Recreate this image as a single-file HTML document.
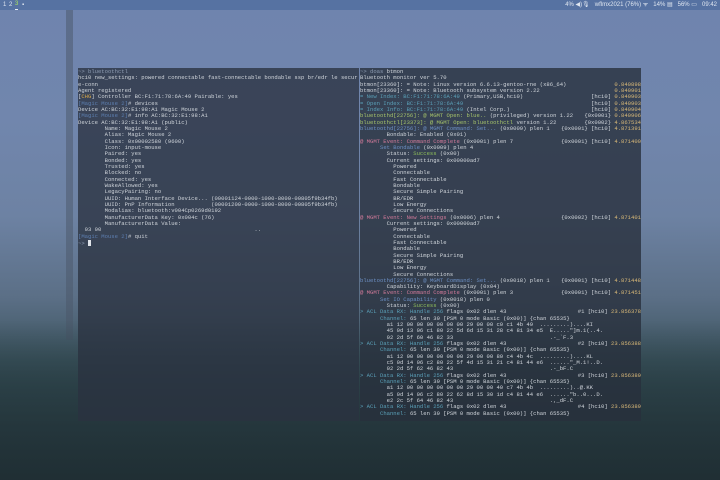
<!DOCTYPE html>
<html><head><meta charset="utf-8"><style>
*{margin:0;padding:0;box-sizing:border-box}
html,body{width:720px;height:480px;overflow:hidden}
body{position:relative;font-family:"Liberation Mono",monospace;
background:linear-gradient(180deg,#6f84ae 0%,#7186ad 25%,#6d82a3 45%,#5b6f86 62%,#3d5560 75%,#2e4149 88%,#26353b 100%);}
.bar{position:absolute;left:0;top:0;width:720px;height:10px;background:#5672a2;font-family:"Liberation Sans",sans-serif;font-size:6px;color:#dfe6f0;line-height:10px}
.bar .ws{position:absolute;top:0}
.bar .act{color:#a8e060;border-bottom:1px solid #e8eef5;line-height:9px}
.bar .rt{position:absolute;right:3px;top:0;white-space:pre}
.pole{position:absolute;left:66px;top:10px;width:7px;height:330px;background:#4a5668;opacity:.5}
.bl{position:absolute;left:0;top:320px;width:720px;height:160px;background:linear-gradient(180deg,rgba(40,70,75,0) 0%,rgba(35,55,60,.6) 40%,rgba(30,45,50,.8) 100%)}
.term{position:absolute;top:68px;height:353px;background:rgba(42,50,64,.78);font-size:5.55px;line-height:6.33px;color:#cfd4da;overflow:hidden;padding-top:1px}
.l{left:78px;width:281px}
.r{left:360px;width:281px;background:rgba(40,47,60,.8)}
.term div{height:6.33px;white-space:pre}
.fr{float:right}
.p{color:#8b9ab0}.b{color:#5d7fb0}.y{color:#d9a84a}.g{color:#a6c46a}.pk{color:#d27a9a}.c{color:#5aa0b8}.t{color:#d8b878}.gr{color:#8fbf5a}.bb{color:#6c8fc4}
.cur{display:inline-block;width:3px;height:6px;background:#e0e4ea;vertical-align:-1px}
</style></head><body>
<div class="pole"></div>
<div class="bl"></div>
<div class="bar"><span class="ws" style="left:3px">1</span><span class="ws" style="left:9px">2</span><span class="ws act" style="left:15px">3</span><span class="ws" style="left:22px">▪</span><span class="rt">4% ◀)🎙   wflmx2021 (76%) ᯤ   14% ▤   56% ▭   09:42</span></div>
<div class="term l"><div><span class="p">~&gt; bluetoothctl</span></div><div>hci0 new_settings: powered connectable fast-connectable bondable ssp br/edr le secur</div><div>e-conn</div><div>Agent registered</div><div>[<span class="y">CHG</span>] Controller BC:F1:71:78:6A:49 Pairable: yes</div><div><span class="b">[Magic Mouse 2]</span># devices</div><div>Device AC:BC:32:E1:98:A1 Magic Mouse 2</div><div><span class="b">[Magic Mouse 2]</span># info AC:BC:32:E1:98:A1</div><div>Device AC:BC:32:E1:98:A1 (public)</div><div>        Name: Magic Mouse 2</div><div>        Alias: Magic Mouse 2</div><div>        Class: 0x00002580 (9600)</div><div>        Icon: input-mouse</div><div>        Paired: yes</div><div>        Bonded: yes</div><div>        Trusted: yes</div><div>        Blocked: no</div><div>        Connected: yes</div><div>        WakeAllowed: yes</div><div>        LegacyPairing: no</div><div>        UUID: Human Interface Device... (00001124-0000-1000-8000-00805f9b34fb)</div><div>        UUID: PnP Information           (00001200-0000-1000-8000-00805f9b34fb)</div><div>        Modalias: bluetooth:v004Cp0269d0192</div><div>        ManufacturerData Key: 0x004c (76)</div><div>        ManufacturerData Value:</div><div>  03 00                                              ..</div><div><span class="b">[Magic Mouse 2]</span># quit</div><div><span class="p">~&gt;</span> <span class="cur"></span></div></div>
<div class="term r"><div><span class="p">~&gt; doas</span> btmon</div><div>Bluetooth monitor ver 5.70</div><div>btmon[23360]: = Note: Linux version 6.6.13-gentoo-rne (x86_64)<span class="fr t">0.840898</span></div><div>btmon[23360]: = Note: Bluetooth subsystem version 2.22<span class="fr t">0.840901</span></div><div><span class="c">= New Index: BC:F1:71:78:6A:49</span> (Primary,USB,hci0)<span class="fr">[hci0] <span class="t">0.840903</span></span></div><div><span class="c">= Open Index: BC:F1:71:78:6A:49</span><span class="fr">[hci0] <span class="t">0.840903</span></span></div><div><span class="c">= Index Info: BC:F1:71:78:6A:49</span> (Intel Corp.)<span class="fr">[hci0] <span class="t">0.840904</span></span></div><div><span class="g">bluetoothd[22756]: @ MGMT Open: blue..</span> (privileged) version 1.22<span class="fr">{0x0001} <span class="t">0.840906</span></span></div><div><span class="g">bluetoothctl[23373]: @ MGMT Open: bluetoothctl</span> version 1.22<span class="fr">{0x0002} <span class="t">4.867534</span></span></div><div><span class="bb">bluetoothd[22756]: @ MGMT Command: Set...</span> (0x0009) plen 1<span class="fr">{0x0001} [hci0] <span class="t">4.871391</span></span></div><div>        Bondable: Enabled (0x01)</div><div><span class="pk">@ MGMT Event: Command Complete</span> (0x0001) plen 7<span class="fr">{0x0001} [hci0] <span class="t">4.871400</span></span></div><div>      <span class="bb">Set Bondable</span> (0x0009) plen 4</div><div>        Status: <span class="gr">Success</span> (0x00)</div><div>        Current settings: 0x00000ad7</div><div>          Powered</div><div>          Connectable</div><div>          Fast Connectable</div><div>          Bondable</div><div>          Secure Simple Pairing</div><div>          BR/EDR</div><div>          Low Energy</div><div>          Secure Connections</div><div><span class="pk">@ MGMT Event: New Settings</span> (0x0006) plen 4<span class="fr">{0x0002} [hci0] <span class="t">4.871401</span></span></div><div>        Current settings: 0x00000ad7</div><div>          Powered</div><div>          Connectable</div><div>          Fast Connectable</div><div>          Bondable</div><div>          Secure Simple Pairing</div><div>          BR/EDR</div><div>          Low Energy</div><div>          Secure Connections</div><div><span class="bb">bluetoothd[22756]: @ MGMT Command: Set...</span> (0x0018) plen 1<span class="fr">{0x0001} [hci0] <span class="t">4.871448</span></span></div><div>        Capability: KeyboardDisplay (0x04)</div><div><span class="pk">@ MGMT Event: Command Complete</span> (0x0001) plen 3<span class="fr">{0x0001} [hci0] <span class="t">4.871451</span></span></div><div>      <span class="bb">Set IO Capability</span> (0x0018) plen 0</div><div>        Status: <span class="gr">Success</span> (0x00)</div><div><span class="c">&gt; ACL Data RX: Handle 256</span> flags 0x02 dlen 43<span class="fr">#1 [hci0] <span class="t">23.856378</span></span></div><div>      <span class="c">Channel:</span> 65 len 39 [PSM 0 mode Basic (0x00)] {chan 65535}</div><div>        a1 12 00 00 00 00 00 00 29 00 00 c0 c1 4b 49  .........)....KI</div><div>        45 0d 13 06 c1 80 22 5d 6d 15 31 28 c4 81 34 e5  E....."]m.1(..4.</div><div>        02 2d 5f 60 46 82 33                             .-_`F.3</div><div><span class="c">&gt; ACL Data RX: Handle 256</span> flags 0x02 dlen 43<span class="fr">#2 [hci0] <span class="t">23.856388</span></span></div><div>      <span class="c">Channel:</span> 65 len 39 [PSM 0 mode Basic (0x00)] {chan 65535}</div><div>        a1 12 00 00 00 00 00 00 29 00 00 80 c4 4b 4c  .........)....KL</div><div>        c5 0d 14 06 c2 80 22 5f 4d 15 31 21 c4 81 44 e6  ......"_M.1!..D.</div><div>        02 2d 5f 62 46 82 43                             .-_bF.C</div><div><span class="c">&gt; ACL Data RX: Handle 256</span> flags 0x02 dlen 43<span class="fr">#3 [hci0] <span class="t">23.856389</span></span></div><div>      <span class="c">Channel:</span> 65 len 39 [PSM 0 mode Basic (0x00)] {chan 65535}</div><div>        a1 12 00 00 00 00 00 00 29 00 00 40 c7 4b 4b  .........)..@.KK</div><div>        a5 0d 14 06 c2 80 22 62 8d 15 30 1d c4 81 44 e6  ......"b..0...D.</div><div>        e2 2c 5f 64 46 82 43                             .,_dF.C</div><div><span class="c">&gt; ACL Data RX: Handle 256</span> flags 0x02 dlen 43<span class="fr">#4 [hci0] <span class="t">23.856389</span></span></div><div>      <span class="c">Channel:</span> 65 len 39 [PSM 0 mode Basic (0x00)] {chan 65535}</div></div>
</body></html>
